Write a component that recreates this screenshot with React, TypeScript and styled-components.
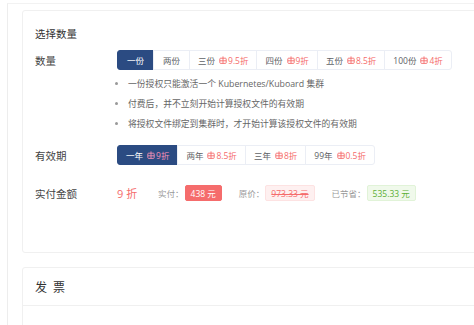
import React from 'react';
import styled, { createGlobalStyle } from 'styled-components';

const GlobalStyle = createGlobalStyle`
  html, body {
    margin: 0;
    padding: 0;
    background: #fff;
    overflow: hidden;
  }
  body {
    font-family: 'Open Sans', 'Noto Sans CJK SC', sans-serif;
    color: #333;
  }
`;

type Option = { label: string; discount?: string };

const counts: Option[] = [
  { label: '一份' },
  { label: '两份' },
  { label: '三份', discount: '9.5折' },
  { label: '四份', discount: '9折' },
  { label: '五份', discount: '8.5折' },
  { label: '100份', discount: '4折' },
];

const periods: Option[] = [
  { label: '一年', discount: '9折' },
  { label: '两年', discount: '8.5折' },
  { label: '三年', discount: '8折' },
  { label: '99年', discount: '0.5折' },
];

const tips = [
  '一份授权只能激活一个 Kubernetes/Kuboard 集群',
  '付费后，并不立刻开始计算授权文件的有效期',
  '将授权文件绑定到集群时，才开始计算该授权文件的有效期',
];

const DiscountIcon = () => (
  <svg width="8" height="8" viewBox="0 0 8 8" fill="none" stroke="currentColor" strokeWidth="0.9">
    <rect x="0.8" y="2.2" width="6.4" height="5.2" rx="0.8" />
    <path d="M4 0.4v7M0.8 4.8h6.4" />
  </svg>
);

const OptionGroup = ({ items, active }: { items: Option[]; active: number }) => (
  <Group>
    {items.map((it, i) => (
      <OptionButton key={it.label} $active={i === active}>
        {it.label}
        {it.discount && (
          <Discount $active={i === active}>
            <DiscountIcon />
            {it.discount}
          </Discount>
        )}
      </OptionButton>
    ))}
  </Group>
);

const App = () => (
  <>
    <GlobalStyle />
    <Page>
      <Card>
        <CardBody>
          <Title>选择数量</Title>
          <Row>
            <Label>数量</Label>
            <OptionGroup items={counts} active={0} />
          </Row>
          <Tips>
            {tips.map((t) => (
              <li key={t}>{t}</li>
            ))}
          </Tips>
          <Row $top={11}>
            <Label>有效期</Label>
            <OptionGroup items={periods} active={0} />
          </Row>
          <Row $top={18}>
            <Label>实付金额</Label>
            <Rate>9 折</Rate>
            <PriceLabel>实付：</PriceLabel>
            <Badge $variant="pay">438 元</Badge>
            <PriceLabel>原价：</PriceLabel>
            <Badge $variant="origin">973.33 元</Badge>
            <PriceLabel>已节省：</PriceLabel>
            <Badge $variant="save">535.33 元</Badge>
          </Row>
        </CardBody>
      </Card>
      <Card $top={14}>
        <CardHeader>发 票</CardHeader>
        <CardBody $height={30} />
      </Card>
    </Page>
  </>
);

export default App;

const Page = styled.div`
  margin-left: 7px;
  border-left: 1px solid #ededed;
  border-top: 1px solid #f2f2f2;
  margin-top: 3px;
  padding: 6px 0 0 14px;
  height: 330px;
  margin-right: -20px;
`;

const Card = styled.div<{ $top?: number }>`
  border: 1px solid #f0f0f0;
  border-radius: 3px;
  background: #fff;
  margin-top: ${({ $top }) => $top ?? 0}px;
`;

const CardBody = styled.div<{ $height?: number }>`
  padding: 15px 12px 0;
  height: ${({ $height }) => ($height !== undefined ? `${$height}px` : '241px')};
  box-sizing: border-box;
`;

const CardHeader = styled.div`
  height: 37px;
  padding: 0 12px;
  display: flex;
  align-items: center;
  font-size: 12px;
  color: #333;
  letter-spacing: 1.5px;
  border-bottom: 1px solid #f0f0f0;
`;

const Title = styled.div`
  font-size: 10.5px;
  line-height: 16px;
  color: #333;
`;

const Row = styled.div<{ $top?: number }>`
  display: flex;
  align-items: center;
  margin-top: ${({ $top }) => $top ?? 8}px;
  min-height: 20px;
`;

const Label = styled.div`
  width: 82px;
  flex-shrink: 0;
  font-size: 10.5px;
  color: #444;
`;

const Group = styled.div`
  display: flex;
`;

const OptionButton = styled.div<{ $active: boolean }>`
  height: 20px;
  box-sizing: border-box;
  padding: 0 8px;
  min-width: 37px;
  display: flex;
  align-items: center;
  justify-content: center;
  gap: 4px;
  font-size: 8.5px;
  white-space: nowrap;
  border: 1px solid ${({ $active }) => ($active ? '#2b4b82' : '#ebeef5')};
  margin-left: -1px;
  background: ${({ $active }) => ($active ? '#2b4b82' : '#fff')};
  color: ${({ $active }) => ($active ? '#fff' : '#606266')};

  &:first-child {
    margin-left: 0;
    border-radius: 3px 0 0 3px;
  }
  &:last-child {
    border-radius: 0 3px 3px 0;
  }
`;

const Discount = styled.span<{ $active: boolean }>`
  display: inline-flex;
  align-items: center;
  gap: 1px;
  color: ${({ $active }) => ($active ? '#f28fb5' : '#f56c6c')};
`;

const Tips = styled.ul`
  margin: 4px 0 0 82px;
  padding: 0 0 0 11px;
  font-size: 8.8px;
  line-height: 19px;
  color: #666;

  li::marker {
    color: #999;
    font-size: 8px;
  }
`;

const Rate = styled.span`
  color: #f56c6c;
  font-size: 11px;
  width: 41px;
`;

const PriceLabel = styled.span`
  font-size: 8.5px;
  color: #999;
  margin-right: 1px;
`;

const badgeColors = {
  pay: { bg: '#f56c6c', fg: '#fff', border: '#f56c6c' },
  origin: { bg: '#fef0f0', fg: '#f56c6c', border: '#fde2e2' },
  save: { bg: '#f0f9eb', fg: '#5daf34', border: '#e1f3d8' },
};

const Badge = styled.span<{ $variant: keyof typeof badgeColors }>`
  height: 16px;
  box-sizing: border-box;
  padding: 0 5px;
  display: inline-flex;
  align-items: center;
  font-size: 8.5px;
  border-radius: 2px;
  margin-right: 17px;
  background: ${({ $variant }) => badgeColors[$variant].bg};
  color: ${({ $variant }) => badgeColors[$variant].fg};
  border: 1px solid ${({ $variant }) => badgeColors[$variant].border};
  text-decoration: ${({ $variant }) => ($variant === 'origin' ? 'line-through' : 'none')};
`;
